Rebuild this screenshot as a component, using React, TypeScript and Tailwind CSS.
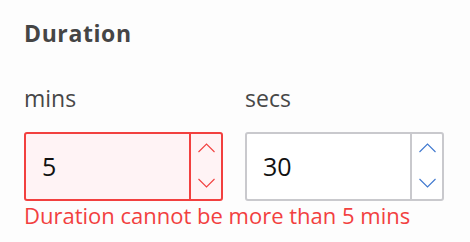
import React from 'react'

const FONT = "font-['Open_Sans','Lato',sans-serif]"

const Chevron = ({ dir, color }: { dir: 'up' | 'down'; color: string }) => (
  <svg width="17" height="10" viewBox="0 0 17 10" fill="none" stroke={color} strokeWidth="1.1">
    {dir === 'up' ? <polyline points="0.5,9 8.5,1 16.5,9" /> : <polyline points="0.5,1 8.5,9 16.5,1" />}
  </svg>
)

interface FieldProps {
  label: string
  value: string
  invalid?: boolean
}

const NumberField = ({ label, value, invalid }: FieldProps) => (
  <div className="flex flex-col">
    <label className="text-[23px] leading-[24px] text-[#474747] mb-[22px]">{label}</label>
    <div
      className={`flex w-[199px] h-[69px] rounded-[3px] border-2 ${
        invalid ? 'border-[#f2403f] bg-[#fff3f5]' : 'border-[#c9c9cd] bg-white'
      }`}
    >
      <div className="flex-1 flex items-center pl-[16px] text-[25px] text-[#111]">{value}</div>
      <div
        className={`w-[32px] flex flex-col items-center justify-between pt-[9px] pb-[11px] border-l-2 ${
          invalid ? 'border-[#f2403f]' : 'border-[#c9c9cd]'
        }`}
      >
        <Chevron dir="up" color={invalid ? '#f2403f' : '#3f78cf'} />
        <Chevron dir="down" color={invalid ? '#f2403f' : '#3f78cf'} />
      </div>
    </div>
  </div>
)

export default function App() {
  return (
    <div className={`min-h-screen bg-[#fdfdfd] pl-[24px] pt-[19px] ${FONT}`}>
      <h2 className="text-[23px] leading-[28px] font-bold tracking-[0.6px] text-[#454545] mb-[39px]">Duration</h2>
      <div className="flex gap-[22px]">
        <NumberField label="mins" value="5" invalid />
        <NumberField label="secs" value="30" />
      </div>
      <p className="text-[22px] leading-[28px] text-[#f2403f]">Duration cannot be more than 5 mins</p>
    </div>
  )
}
